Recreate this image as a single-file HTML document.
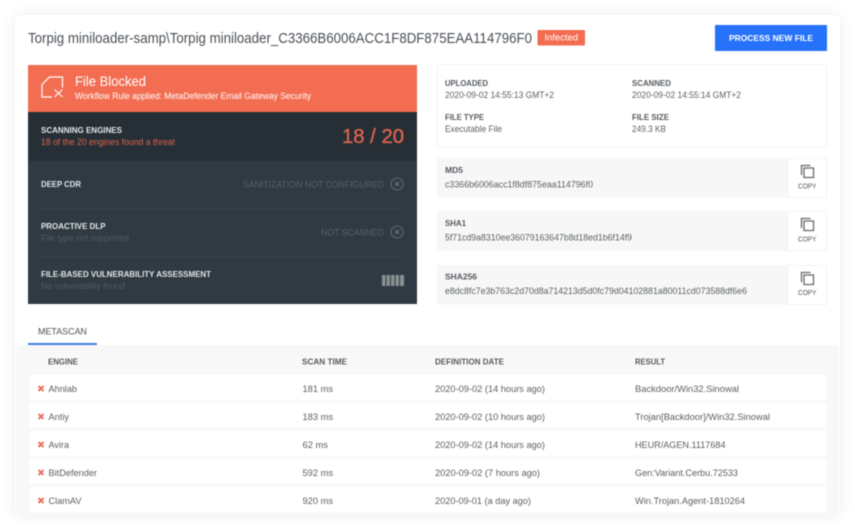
<!DOCTYPE html>
<html lang="en"><head><meta charset="utf-8"><title>File report</title>
<style>
html,body{margin:0;padding:0;width:855px;height:532px;overflow:hidden;background:#fff}
.card{position:absolute;left:15px;top:15px;width:825px;height:500px;background:#fff;border-radius:6px;box-shadow:0 0 14px rgba(60,80,110,.10)}
svg{position:absolute;left:0;top:0;filter:blur(.4px)}
text{font-family:"Liberation Sans",sans-serif;font-size:9px;fill:#555b60}
.h{font-weight:bold;fill:#565b60;font-size:8.5px}
.w{font-weight:bold;fill:#e4e7e9;font-size:8.5px}
.v{fill:#5c6266;font-size:9px}
.d{fill:#4f5b63;font-size:9px}
.r{fill:#5a5f63;font-size:9px}
</style></head><body>
<div class="card"></div>
<svg width="855" height="532" viewBox="0 0 855 532" xmlns="http://www.w3.org/2000/svg">
<text x="28" y="43" textLength="504" lengthAdjust="spacingAndGlyphs" style="font-size:14.5px;fill:#4a5056">Torpig miniloader-samp\Torpig miniloader_C3366B6006ACC1F8DF875EAA114796F0</text>
<rect x="537.5" y="30" width="47.5" height="15.5" rx="1" fill="#f26d51"/>
<text x="544.5" y="40.3" textLength="33.5" lengthAdjust="spacingAndGlyphs" style="font-size:9.5px;fill:#fff">Infected</text>
<rect x="715" y="25" width="112" height="26" fill="#2672fb"/>
<text x="729" y="41" textLength="84" lengthAdjust="spacingAndGlyphs" style="font-size:8.5px;font-weight:bold;fill:#fff">PROCESS NEW FILE</text>

<rect x="28" y="65" width="389" height="47" fill="#f26d51"/>
<rect x="28" y="112" width="389" height="49" fill="#272f36"/>
<rect x="28" y="161" width="389" height="143" fill="#2f3a42"/>
<path d="M42 84.500L49.500 77H62.500V87.500M42 84.500V97H52" fill="none" stroke="#fff" stroke-width="1.200"/>
<path d="M54.500 89.500L62.500 97M62.500 89.500L54.500 97" fill="none" stroke="#fff" stroke-width="1.100"/>
<text x="75" y="86" textLength="71" lengthAdjust="spacingAndGlyphs" style="font-size:14px;fill:#fff">File Blocked</text>
<text x="75" y="99" textLength="236" lengthAdjust="spacingAndGlyphs" style="font-size:9px;fill:#fff">Workflow Rule applied: MetaDefender Email Gateway Security</text>
<text class="w" x="41" y="133" textLength="81" lengthAdjust="spacingAndGlyphs">SCANNING ENGINES</text>
<text x="41" y="145" textLength="134" lengthAdjust="spacingAndGlyphs" style="fill:#d9634c">18 of the 20 engines found a threat</text>
<text x="342" y="143" textLength="62" lengthAdjust="spacingAndGlyphs" style="font-size:20px;fill:#e0654e;stroke:#e0654e;stroke-width:.3px">18 / 20</text>
<text class="w" x="41" y="187" textLength="40" lengthAdjust="spacingAndGlyphs">DEEP CDR</text>
<text x="243" y="187.500" textLength="141" lengthAdjust="spacingAndGlyphs" style="fill:#56616a">SANITIZATION NOT CONFIGURED</text>
<rect x="41" y="208" width="363" height="1" fill="#38434b"/>
<g fill="none" stroke="#5f6a71" stroke-width="1.100"><circle cx="397" cy="184" r="6"/><path d="M395 182L399 186M399 182L395 186" stroke-width="1.500"/><circle cx="397" cy="232" r="6"/><path d="M395 230L399 234M399 230L395 234" stroke-width="1.500"/></g>
<text class="w" x="41" y="229" textLength="64.500" lengthAdjust="spacingAndGlyphs">PROACTIVE DLP</text>
<text class="d" x="41" y="241" textLength="88" lengthAdjust="spacingAndGlyphs">File type not supported</text>
<text x="321" y="235.500" textLength="63" lengthAdjust="spacingAndGlyphs" style="fill:#56616a">NOT SCANNED</text>
<rect x="41" y="256.500" width="363" height="1" fill="#38434b"/>
<text class="w" x="41" y="277" textLength="170" lengthAdjust="spacingAndGlyphs">FILE-BASED VULNERABILITY ASSESSMENT</text>
<text class="d" x="41" y="289" textLength="84" lengthAdjust="spacingAndGlyphs">No vulnerability found</text>
<g fill="#87908f"><rect x="382" y="275" width="3.500" height="11"/><rect x="386.500" y="275" width="3.500" height="11"/><rect x="391" y="275" width="3.500" height="11"/><rect x="395.500" y="275" width="3.500" height="11"/><rect x="400" y="275" width="4" height="11"/></g>

<rect x="437.500" y="64.500" width="389" height="83" fill="#fff" stroke="#f3f3f3"/>
<text class="h" x="445" y="86" textLength="43" lengthAdjust="spacingAndGlyphs">UPLOADED</text>
<text class="v" x="445" y="98" textLength="109" lengthAdjust="spacingAndGlyphs">2020-09-02 14:55:13 GMT+2</text>
<text class="h" x="632" y="86" textLength="39" lengthAdjust="spacingAndGlyphs">SCANNED</text>
<text class="v" x="632" y="98" textLength="109" lengthAdjust="spacingAndGlyphs">2020-09-02 14:55:14 GMT+2</text>
<text class="h" x="445" y="120" textLength="39" lengthAdjust="spacingAndGlyphs">FILE TYPE</text>
<text class="v" x="445" y="132" textLength="57" lengthAdjust="spacingAndGlyphs">Executable File</text>
<text class="h" x="632" y="120" textLength="37" lengthAdjust="spacingAndGlyphs">FILE SIZE</text>
<text class="v" x="632" y="132" textLength="34" lengthAdjust="spacingAndGlyphs">249.3 KB</text>

<g fill="#f7f7f7"><rect x="437" y="158" width="350" height="39.500"/><rect x="437" y="211" width="350" height="40"/><rect x="437" y="265" width="350" height="39.500"/></g>
<g fill="#fff" stroke="#f3f3f3"><rect x="787.500" y="158.500" width="39" height="39"/><rect x="787.500" y="211.500" width="39" height="39"/><rect x="787.500" y="265.500" width="39" height="39"/></g>
<text class="h" x="445" y="173" textLength="18" lengthAdjust="spacingAndGlyphs">MD5</text>
<text class="v" x="445" y="187.500" textLength="148" lengthAdjust="spacingAndGlyphs">c3366b6006acc1f8df875eaa114796f0</text>
<text class="h" x="445" y="226" textLength="21" lengthAdjust="spacingAndGlyphs">SHA1</text>
<text class="v" x="445" y="240.500" textLength="187" lengthAdjust="spacingAndGlyphs">5f71cd9a8310ee36079163647b8d18ed1b6f14f9</text>
<text class="h" x="445" y="279.500" textLength="32" lengthAdjust="spacingAndGlyphs">SHA256</text>
<text class="v" x="445" y="294" textLength="302" lengthAdjust="spacingAndGlyphs">e8dc8fc7e3b763c2d70d8a714213d5d0fc79d04102881a80011cd073588df6e6</text>
<g fill="none" stroke="#666a68" stroke-width="1.300">
<path d="M801.500 175V165.500H810.500M804 168H813.500V177.500H804Z"/>
<path d="M801.500 228V218.500H810.500M804 221H813.500V230.500H804Z"/>
<path d="M801.500 282V272.500H810.500M804 275H813.500V284.500H804Z"/>
</g>
<text x="798" y="188.500" textLength="18.500" lengthAdjust="spacingAndGlyphs" style="font-size:7.500px;fill:#555">COPY</text>
<text x="798" y="241.500" textLength="18.500" lengthAdjust="spacingAndGlyphs" style="font-size:7.500px;fill:#555">COPY</text>
<text x="798" y="295" textLength="18.500" lengthAdjust="spacingAndGlyphs" style="font-size:7.500px;fill:#555">COPY</text>

<text x="38" y="334.500" textLength="49" lengthAdjust="spacingAndGlyphs" style="font-size:9.500px;fill:#4a5056">METASCAN</text>
<rect x="16" y="345" width="823" height="170" rx="5" fill="#f8f8f8"/>
<rect x="28" y="343" width="69" height="2" fill="#3f7fe0"/>
<text class="h" x="48" y="364.500" textLength="30" lengthAdjust="spacingAndGlyphs">ENGINE</text>
<text class="h" x="302" y="364.500" textLength="45" lengthAdjust="spacingAndGlyphs">SCAN TIME</text>
<text class="h" x="435" y="364.500" textLength="69" lengthAdjust="spacingAndGlyphs">DEFINITION DATE</text>
<text class="h" x="635" y="364.500" textLength="30" lengthAdjust="spacingAndGlyphs">RESULT</text>
<g fill="#fff"><rect x="29" y="375" width="797" height="25"/><rect x="29" y="403" width="797" height="25"/><rect x="29" y="431" width="797" height="25"/><rect x="29" y="459" width="797" height="25"/><rect x="29" y="487" width="797" height="25"/></g>
<g fill="none" stroke="#e8695a" stroke-width="1.900">
<path d="M38.500 386L43.500 391M43.500 386L38.500 391"/>
<path d="M38.500 414L43.500 419M43.500 414L38.500 419"/>
<path d="M38.500 442L43.500 447M43.500 442L38.500 447"/>
<path d="M38.500 470L43.500 475M43.500 470L38.500 475"/>
<path d="M38.500 498L43.500 503M43.500 498L38.500 503"/>
</g>
<text class="r" x="48.500" y="392" textLength="28.500" lengthAdjust="spacingAndGlyphs">Ahnlab</text>
<text class="r" x="302.500" y="392" textLength="30.500" lengthAdjust="spacingAndGlyphs">181 ms</text>
<text class="r" x="435" y="392" textLength="110" lengthAdjust="spacingAndGlyphs">2020-09-02 (14 hours ago)</text>
<text class="r" x="635" y="392" textLength="104" lengthAdjust="spacingAndGlyphs">Backdoor/Win32.Sinowal</text>
<text class="r" x="48.500" y="420" textLength="20.500" lengthAdjust="spacingAndGlyphs">Antiy</text>
<text class="r" x="302.500" y="420" textLength="30.500" lengthAdjust="spacingAndGlyphs">183 ms</text>
<text class="r" x="435" y="420" textLength="110" lengthAdjust="spacingAndGlyphs">2020-09-02 (10 hours ago)</text>
<text class="r" x="635" y="420" textLength="135" lengthAdjust="spacingAndGlyphs">Trojan[Backdoor]/Win32.Sinowal</text>
<text class="r" x="48.500" y="448" textLength="20.500" lengthAdjust="spacingAndGlyphs">Avira</text>
<text class="r" x="302.500" y="448" textLength="25.500" lengthAdjust="spacingAndGlyphs">62 ms</text>
<text class="r" x="435" y="448" textLength="110" lengthAdjust="spacingAndGlyphs">2020-09-02 (14 hours ago)</text>
<text class="r" x="635" y="448" textLength="90.500" lengthAdjust="spacingAndGlyphs">HEUR/AGEN.1117684</text>
<text class="r" x="48.500" y="476" textLength="48.500" lengthAdjust="spacingAndGlyphs">BitDefender</text>
<text class="r" x="302.500" y="476" textLength="30.500" lengthAdjust="spacingAndGlyphs">592 ms</text>
<text class="r" x="435" y="476" textLength="105" lengthAdjust="spacingAndGlyphs">2020-09-02 (7 hours ago)</text>
<text class="r" x="635" y="476" textLength="103" lengthAdjust="spacingAndGlyphs">Gen:Variant.Cerbu.72533</text>
<text class="r" x="48.500" y="504" textLength="33" lengthAdjust="spacingAndGlyphs">ClamAV</text>
<text class="r" x="302.500" y="504" textLength="30.500" lengthAdjust="spacingAndGlyphs">920 ms</text>
<text class="r" x="435" y="504" textLength="96" lengthAdjust="spacingAndGlyphs">2020-09-01 (a day ago)</text>
<text class="r" x="635" y="504" textLength="110" lengthAdjust="spacingAndGlyphs">Win.Trojan.Agent-1810264</text>
</svg>
</body></html>
